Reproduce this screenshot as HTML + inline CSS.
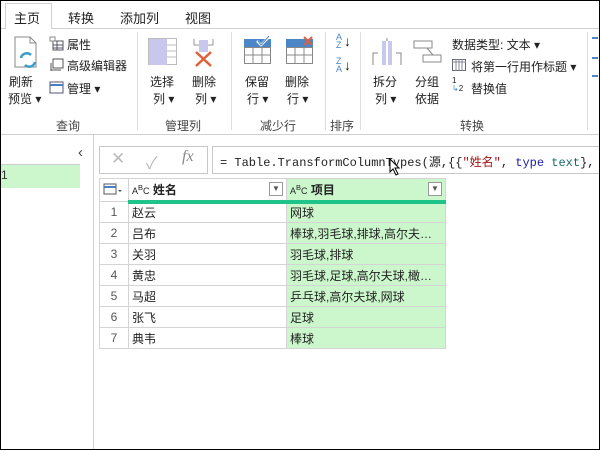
<!DOCTYPE html><html><head><meta charset="utf-8"><style>
*{margin:0;padding:0;box-sizing:border-box}
body{width:600px;height:450px;overflow:hidden;background:#fff;font-family:"Liberation Sans","Noto Sans CJK SC",sans-serif;font-size:12px;color:#222;position:relative}
.a{position:absolute;white-space:nowrap}
.mono{font-family:"Liberation Mono","Noto Sans CJK SC",monospace}
.lbl{color:#444}
td{border:1px solid #d4d4d4;height:21px;padding:0 3px;font-size:12px}
</style></head><body>
<div class="a" style="left:0;top:0;width:600px;height:450px;border:1px solid #000;z-index:5;pointer-events:none"></div>
<div class="a" style="left:0;top:28px;width:600px;height:1px;background:#d0d0d0"></div>
<div class="a" style="left:5px;top:3px;width:47px;height:26px;border:1px solid #d0d0d0;border-bottom:none;background:#fff"></div>
<div class="a" style="left:14px;top:8px;font-size:13px">主页</div>
<div class="a" style="left:68px;top:8px;font-size:13px">转换</div>
<div class="a" style="left:120px;top:8px;font-size:13px">添加列</div>
<div class="a" style="left:185px;top:8px;font-size:13px">视图</div>
<div class="a" style="left:0;top:134px;width:600px;height:1px;background:#d0d0d0"></div>
<div class="a" style="left:137px;top:32px;width:1px;height:98px;background:#ddd"></div>
<div class="a" style="left:231px;top:32px;width:1px;height:98px;background:#ddd"></div>
<div class="a" style="left:325px;top:32px;width:1px;height:98px;background:#ddd"></div>
<div class="a" style="left:360px;top:32px;width:1px;height:98px;background:#ddd"></div>
<div class="a" style="left:587px;top:32px;width:1px;height:98px;background:#ddd"></div>
<svg class="a" style="left:12px;top:36px" width="30" height="34"><path d="M3 1h15l6 6v24H3z" fill="#fff" stroke="#888"/><path d="M18 1v6h6" fill="none" stroke="#888"/><path d="M19 19a6 6 0 0 0-10 3M13 29a6 6 0 0 0 10-3" fill="none" stroke="#3a9ec6" stroke-width="2.5"/></svg>
<div class="a" style="left:9px;top:73px">刷新</div>
<div class="a" style="left:8px;top:90px">预览 ▾</div>
<svg class="a" style="left:49px;top:36px" width="15" height="15"><rect x="4" y="5" width="10" height="9" fill="#fff" stroke="#556"/><path d="M4 9h10M4 12h10M8 5v9" stroke="#556"/><path d="M1 1h5v4H1z" fill="#fff" stroke="#888"/></svg>
<div class="a" style="left:67px;top:36px">属性</div>
<svg class="a" style="left:49px;top:57px" width="15" height="15"><path d="M4 2h10v9H4z M2 13h10" fill="#fff" stroke="#555"/><path d="M2 6v8" stroke="#555"/></svg>
<div class="a" style="left:67px;top:57px">高级编辑器</div>
<svg class="a" style="left:49px;top:81px" width="15" height="13"><rect x="1" y="1" width="13" height="11" fill="#fff" stroke="#557"/><path d="M1 4h13" stroke="#4a7fc0" stroke-width="2"/></svg>
<div class="a" style="left:67px;top:80px">管理 ▾</div>
<div class="a lbl" style="left:56px;top:117px">查询</div>
<svg class="a" style="left:148px;top:38px" width="30" height="28"><rect x="0.5" y="0.5" width="28" height="26" fill="#fff" stroke="#bbb"/><rect x="1" y="1" width="18" height="26" fill="#c8c8ef"/><path d="M19 7h10M19 13h10M19 19h10" stroke="#bbb"/></svg>
<div class="a" style="left:150px;top:73px">选择</div>
<div class="a" style="left:153px;top:90px">列 ▾</div>
<svg class="a" style="left:192px;top:38px" width="24" height="30"><path d="M2 1v6h19V1" fill="none" stroke="#999"/><rect x="7" y="2" width="9" height="12" fill="#c8c8ef"/><path d="M4 14l15 14M19 14L4 28" stroke="#e0603a" stroke-width="2.5"/></svg>
<div class="a" style="left:192px;top:73px">删除</div>
<div class="a" style="left:195px;top:90px">列 ▾</div>
<div class="a lbl" style="left:165px;top:117px">管理列</div>
<svg class="a" style="left:243px;top:36px" width="30" height="30"><rect x="1" y="3" width="27" height="8" fill="#4a86c8"/><rect x="1.5" y="11.5" width="26" height="16" fill="#fff" stroke="#888"/><path d="M1 19h27M10 11v16M19 11v16" stroke="#888"/><path d="M14 5l4 4 9-9" fill="none" stroke="#fff" stroke-width="2.5"/><path d="M15 5l3 4 8-9" fill="none" stroke="#4a86c8" stroke-width="1"/></svg>
<div class="a" style="left:245px;top:73px">保留</div>
<div class="a" style="left:247px;top:90px">行 ▾</div>
<svg class="a" style="left:285px;top:36px" width="30" height="30"><rect x="1" y="3" width="27" height="8" fill="#4a86c8"/><rect x="1.5" y="11.5" width="26" height="16" fill="#fff" stroke="#888"/><path d="M1 19h27M10 11v16M19 11v16" stroke="#888"/><path d="M19 1l8 8M27 1l-8 8" stroke="#e0603a" stroke-width="2"/></svg>
<div class="a" style="left:285px;top:73px">删除</div>
<div class="a" style="left:287px;top:90px">行 ▾</div>
<div class="a lbl" style="left:260px;top:117px">减少行</div>
<div class="a" style="left:336px;top:33px;font-size:9px;line-height:8px;color:#4a86c8">A<br>Z</div>
<div class="a" style="left:344px;top:33px;font-size:14px">↓</div>
<div class="a" style="left:336px;top:57px;font-size:9px;line-height:8px;color:#4a86c8">Z<br>A</div>
<div class="a" style="left:344px;top:57px;font-size:14px">↓</div>
<div class="a lbl" style="left:330px;top:117px">排序</div>
<svg class="a" style="left:372px;top:36px" width="30" height="30"><rect x="10" y="5" width="4" height="24" fill="#c8c8ef"/><rect x="16" y="5" width="4" height="24" fill="#c8c8ef"/><path d="M1 29V17h5M29 29V17h-5" fill="none" stroke="#888"/><path d="M15 2v3" stroke="#888"/></svg>
<div class="a" style="left:373px;top:73px">拆分</div>
<div class="a" style="left:375px;top:90px">列 ▾</div>
<svg class="a" style="left:413px;top:40px" width="30" height="24"><rect x="1" y="1" width="18" height="7" fill="#fff" stroke="#888"/><rect x="10" y="15" width="18" height="7" fill="#fff" stroke="#888"/><path d="M14 8l6 7" stroke="#888"/></svg>
<div class="a" style="left:415px;top:73px">分组</div>
<div class="a" style="left:415px;top:90px">依据</div>
<div class="a" style="left:452px;top:36px">数据类型: 文本 ▾</div>
<svg class="a" style="left:452px;top:59px" width="14" height="12"><rect x="0.5" y="0.5" width="13" height="11" fill="#fff" stroke="#667"/><path d="M0 3h14M4 0v12M7 0v12M10 0v12" stroke="#889"/></svg>
<div class="a" style="left:471px;top:58px">将第一行用作标题 ▾</div>
<div class="a" style="left:452px;top:77px;font-size:8px;line-height:8px">1<br><span style="color:#4a86c8">↳</span>2</div>
<div class="a" style="left:471px;top:80px">替换值</div>
<div class="a lbl" style="left:460px;top:117px">转换</div>
<svg class="a" style="left:592px;top:36px" width="8" height="50"><path d="M0 2h6M0 22h6M0 40h6" stroke="#4a86c8" stroke-width="2"/></svg>
<div class="a" style="left:93px;top:135px;width:1px;height:315px;background:#d0d0d0"></div>
<div class="a" style="left:78px;top:144px;font-size:15px;color:#444">‹</div>
<div class="a" style="left:0;top:164px;width:80px;height:1px;background:#ccc"></div>
<div class="a" style="left:0;top:165px;width:80px;height:23px;background:#ccf7cc"></div>
<div class="a" style="left:1px;top:168px;color:#333">1</div>
<div class="a" style="left:99px;top:146px;width:109px;height:28px;border:1px solid #c8c8c8"></div>
<div class="a" style="left:111px;top:149px;font-size:17px;color:#bbb">✕</div>
<div class="a" style="left:146px;top:149px;font-size:17px;color:#bbb">✓</div>
<div class="a" style="left:182px;top:148px;font-size:16px;font-style:italic;font-family:'Liberation Serif',serif;color:#888">fx</div>
<div class="a" style="left:212px;top:146px;width:388px;height:28px;border:1px solid #c8c8c8;border-right:none;overflow:hidden">
<div class="a mono" style="left:7px;top:6px;font-size:12px;color:#222">= Table.TransformColumnTypes(源,{{<span style="color:#a31515">"姓名"</span>, <span style="color:#1a1aa6">type</span> <span style="color:#1a6a6a">text</span>}, {<span style="color:#a31515">"项目</span></div></div>
<svg class="a" style="left:389px;top:158px" width="12" height="18"><path d="M1 1v13l3-3 3 6 2-1-3-6h4z" fill="#fff" stroke="#000"/></svg>
<table class="a" style="left:99px;top:178px;border-collapse:collapse;width:347px">
<tr style="height:23px"><td style="width:29px;background:#fff"><svg width="20" height="12"><rect x="1" y="1" width="12" height="10" fill="#fff" stroke="#556"/><path d="M1 4h12" stroke="#4a7fc0" stroke-width="2"/><path d="M15 7l2 2 2-2" fill="#555"/></svg></td>
<td style="width:158px;position:relative;border-bottom:4px solid #1fc48a"><span style="font-size:9px">A<sup>B</sup>C</span> <b>姓名</b><span style="position:absolute;right:3px;top:3px;width:14px;height:14px;border:1px solid #999;font-size:8px;text-align:center;line-height:12px;color:#555">▼</span></td>
<td style="background:#ccf7cc;position:relative;border-bottom:4px solid #1fc48a"><span style="font-size:9px">A<sup>B</sup>C</span> <b>项目</b><span style="position:absolute;right:3px;top:3px;width:14px;height:14px;border:1px solid #999;background:#fff;font-size:8px;text-align:center;line-height:12px;color:#555">▼</span></td></tr>
<tr><td style="text-align:center;color:#555">1</td><td>赵云</td><td style="background:#ccf7cc">网球</td></tr>
<tr><td style="text-align:center;color:#555">2</td><td>吕布</td><td style="background:#ccf7cc">棒球,羽毛球,排球,高尔夫…</td></tr>
<tr><td style="text-align:center;color:#555">3</td><td>关羽</td><td style="background:#ccf7cc">羽毛球,排球</td></tr>
<tr><td style="text-align:center;color:#555">4</td><td>黄忠</td><td style="background:#ccf7cc">羽毛球,足球,高尔夫球,橄…</td></tr>
<tr><td style="text-align:center;color:#555">5</td><td>马超</td><td style="background:#ccf7cc">乒乓球,高尔夫球,网球</td></tr>
<tr><td style="text-align:center;color:#555">6</td><td>张飞</td><td style="background:#ccf7cc">足球</td></tr>
<tr><td style="text-align:center;color:#555">7</td><td>典韦</td><td style="background:#ccf7cc">棒球</td></tr>
</table>
</body></html>
